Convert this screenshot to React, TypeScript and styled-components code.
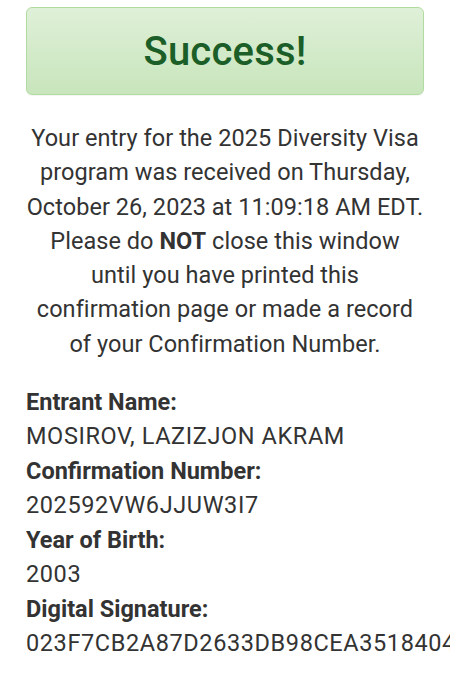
import React from "react";
import styled, { createGlobalStyle } from "styled-components";

const GlobalStyle = createGlobalStyle`
  html, body {
    margin: 0;
    padding: 0;
    background: #ffffff;
    overflow-x: hidden;
  }
  body {
    font-family: Roboto, "Liberation Sans", Arial, sans-serif;
    color: #333333;
  }
`;

const Page = styled.div`
  display: flex;
  flex-direction: column;
  padding: 7px 26px 0 26px;
  overflow: hidden;
`;

const Alert = styled.div`
  height: 88px;
  box-sizing: border-box;
  display: flex;
  align-items: center;
  justify-content: center;
  border: 1px solid #b2dba1;
  border-radius: 6px;
  background: linear-gradient(to bottom, #dff0d8 0%, #c8e5bc 100%);
  box-shadow: 0 1px 1px rgba(0, 0, 0, 0.04);
`;

const Title = styled.h1`
  margin: 0;
  font-size: 40px;
  font-weight: 500;
  color: #1b5e27;
  letter-spacing: 0.2px;
`;

const Message = styled.p`
  margin: 26px -10px 0 -10px;
  text-align: center;
  font-size: 23.5px;
  line-height: 34.3px;
  letter-spacing: 0.05px;
`;

const Details = styled.dl`
  margin: 24px -26px 0 0;
  font-size: 23.5px;
  line-height: 34.4px;
  overflow: hidden;
`;

const Label = styled.dt`
  font-weight: 700;
`;

const Value = styled.dd`
  margin: 0;
  white-space: nowrap;
  letter-spacing: 0.6px;
`;

const fields = [
  { label: "Entrant Name:", value: "MOSIROV, LAZIZJON AKRAM" },
  { label: "Confirmation Number:", value: "202592VW6JJUW3I7" },
  { label: "Year of Birth:", value: "2003" },
  { label: "Digital Signature:", value: "023F7CB2A87D2633DB98CEA35184048F2" },
];

export default function App() {
  return (
    <>
      <GlobalStyle />
      <Page>
        <Alert>
          <Title>Success!</Title>
        </Alert>
        <Message>
          Your entry for the 2025 Diversity Visa
          <br />
          program was received on Thursday,
          <br />
          October 26, 2023 at 11:09:18 AM EDT.
          <br />
          Please do <b>NOT</b> close this window
          <br />
          until you have printed this
          <br />
          confirmation page or made a record
          <br />
          of your Confirmation Number.
        </Message>
        <Details>
          {fields.map((f) => (
            <React.Fragment key={f.label}>
              <Label>{f.label}</Label>
              <Value>{f.value}</Value>
            </React.Fragment>
          ))}
        </Details>
      </Page>
    </>
  );
}
